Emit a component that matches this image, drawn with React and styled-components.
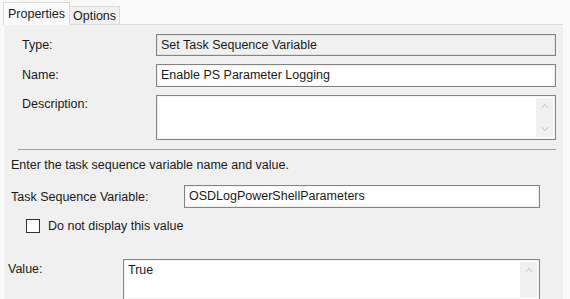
import styled, { createGlobalStyle } from "styled-components";
import { ChevronUp, ChevronDown } from "lucide-react";

const GlobalStyle = createGlobalStyle`
  html, body {
    margin: 0;
    padding: 0;
    background: #f9f9f9;
    width: 570px;
    height: 299px;
    overflow: hidden;
  }
  * {
    box-sizing: border-box;
  }
`;

const Window = styled.div`
  width: 570px;
  height: 299px;
  padding: 2px 7px 0 3px;
  font-family: "Liberation Sans", Arial, sans-serif;
  font-size: 12.5px;
  color: #1a1a1a;
  display: flex;
  flex-direction: column;
  overflow: hidden;
`;

const TabStrip = styled.div`
  display: flex;
  align-items: flex-end;
  height: 23px;
`;

const Tab = styled.div`
  height: ${(p) => (p.active ? "23px" : "19px")};
  padding: 0 ${(p) => (p.active ? "4px" : "3px")};
  display: flex;
  align-items: center;
  background: ${(p) => (p.active ? "#fbfbfb" : "#f0f0f0")};
  border: 1px solid #dadada;
  border-bottom: ${(p) => (p.active ? "none" : "1px solid #dadada")};
  margin-left: ${(p) => (p.active ? "0" : "-1px")};
  position: relative;
  z-index: ${(p) => (p.active ? 1 : 0)};
`;

const Page = styled.div`
  flex: 1;
  min-height: 0;
  overflow: hidden;
  background: #f0f0f0;
  border-top: 1px solid #dadada;
  border-left: 1px solid #fdfdfd;
  margin-top: -1px;
  display: flex;
  flex-direction: column;
`;

const TopSection = styled.div`
  padding: 9px 7px 0 18px;
  display: grid;
  grid-template-columns: 134px 1fr;
  row-gap: 8px;
`;

const Label = styled.div`
  padding-top: ${(p) => p.pad || "4px"};
`;

const Field = styled.div`
  position: relative;
  height: ${(p) => p.h || "23px"};
  background: ${(p) => (p.disabled ? "#f0f0f0" : "#ffffff")};
  border: 1px solid #838383;
  border-bottom: ${(p) => (p.open ? "none" : "1px solid #838383")};
  box-shadow: inset 0 0 0 1px ${(p) => (p.disabled ? "#e2e2e2" : "#f4f4f4")};
  padding: 3px 4px;
  white-space: nowrap;
  overflow: hidden;
`;

const ScrollBar = styled.div`
  position: absolute;
  top: 2px;
  bottom: 2px;
  right: 2px;
  width: 17px;
  background: #f0f0f0;
  display: flex;
  flex-direction: column;
  justify-content: space-between;
  align-items: center;
  color: #a8a8a8;
  padding: 2px 0;
`;

const Separator = styled.hr`
  margin: 9px 7px 0 14px;
  border: none;
  border-top: 1px solid #a0a0a0;
  height: 0;
`;

const BottomSection = styled.div`
  padding: 8px 0 0 7px;
  display: flex;
  flex-direction: column;
`;

const Row = styled.div`
  display: flex;
  align-items: ${(p) => p.align || "center"};
  margin-top: ${(p) => p.mt || "0"};
`;

const RowLabel = styled.div`
  width: ${(p) => p.w};
  flex-shrink: 0;
  padding-top: ${(p) => p.pad || "0"};
  margin-left: ${(p) => p.ml || "0"};
`;

const CheckRow = styled.label`
  display: flex;
  align-items: center;
  gap: 8px;
  margin: 11px 0 0 15px;
`;

const Box = styled.span`
  width: 14px;
  height: 14px;
  background: #ffffff;
  border: 1px solid #333333;
`;

const Sized = styled(Field)`
  width: ${(p) => p.w};
`;

export default function App() {
  return (
    <>
      <GlobalStyle />
      <Window>
        <TabStrip>
          <Tab active>Properties</Tab>
          <Tab>Options</Tab>
        </TabStrip>
        <Page>
          <TopSection>
            <Label>Type:</Label>
            <Field disabled h="22px">Set Task Sequence Variable</Field>
            <Label>Name:</Label>
            <Field>Enable PS Parameter Logging</Field>
            <Label pad="2px">Description:</Label>
            <Field h="45px">
              <ScrollBar>
                <ChevronUp size={12} strokeWidth={1.6} />
                <ChevronDown size={12} strokeWidth={1.6} />
              </ScrollBar>
            </Field>
          </TopSection>
          <Separator />
          <BottomSection>
            <div>Enter the task sequence variable name and value.</div>
            <Row mt="13px">
              <RowLabel w="173px">Task Sequence Variable:</RowLabel>
              <Sized w="356px" h="23px">OSDLogPowerShellParameters</Sized>
            </Row>
            <CheckRow>
              <Box />
              Do not display this value
            </CheckRow>
            <Row mt="26px" align="flex-start">
              <RowLabel w="115px" ml="-3px" pad="3px">Value:</RowLabel>
              <Sized w="417px" h="40px" open>
                True
                <ScrollBar>
                  <ChevronUp size={12} strokeWidth={1.6} />
                </ScrollBar>
              </Sized>
            </Row>
          </BottomSection>
        </Page>
      </Window>
    </>
  );
}
